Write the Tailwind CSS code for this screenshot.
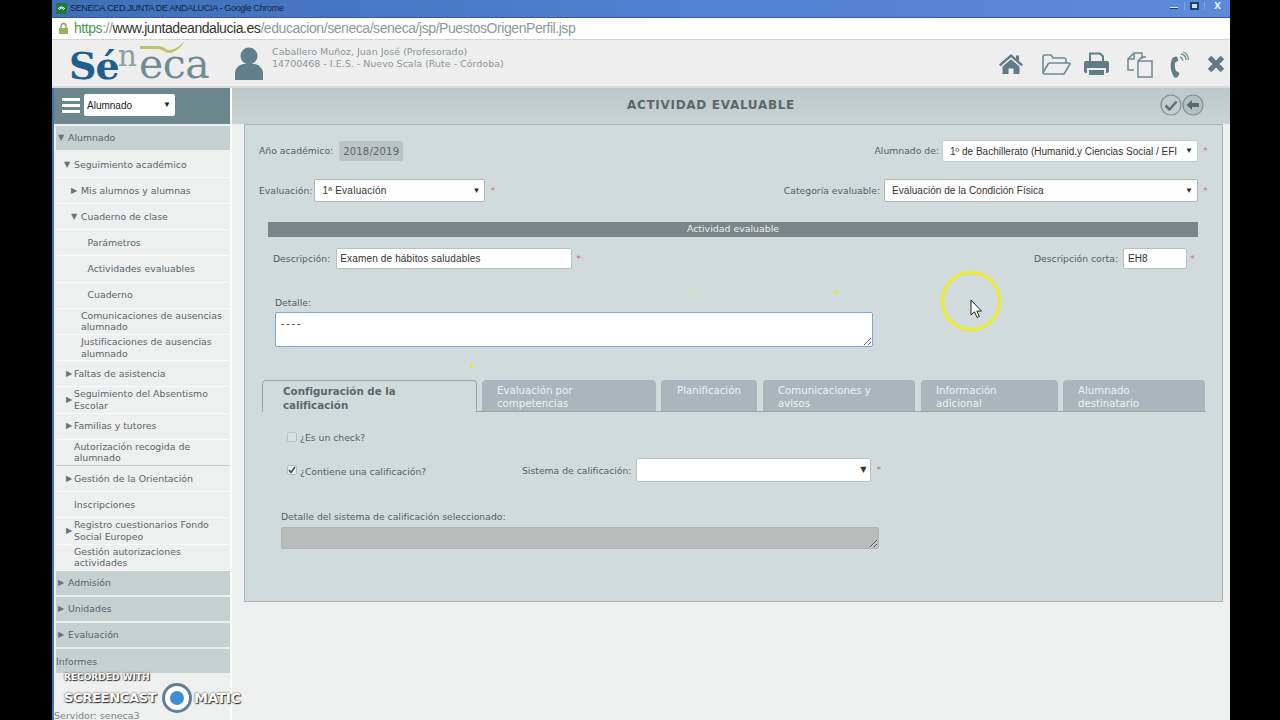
<!DOCTYPE html>
<html lang="es"><head><meta charset="utf-8"><title>SENECA</title>
<script src="https://cdn.jsdelivr.net/npm/@tailwindcss/browser@4"></script></head>
<body class="bg-black overflow-hidden">
<div class="relative w-[1280px] h-[720px] overflow-hidden bg-black font-['DejaVu_Sans',sans-serif] text-[9.250px] text-[#555f62]">
 <div class="ml-[52px] w-[1178px] h-[720px] flex flex-col bg-[#eeefef]">
  <!-- title bar -->
  <div class="h-[18px] shrink-0 flex items-center bg-gradient-to-r from-[#3f6fb5] via-[#4f80cf] to-[#5b8ad8] border-b border-[#2f5c9e]">
   <div class="ml-[4px] w-[11px] h-[11px] bg-[#1d7a3a] rounded-[1px] flex items-center justify-center"><svg width="9" height="7" viewBox="0 0 9 7"><path d="M1 4a4 4 0 0 1 7 0M2.500 5a2 2 0 0 1 4 0" stroke="#fff" fill="none"/></svg></div>
   <span class="ml-[3px] text-[#13233f] font-['Liberation_Sans',sans-serif] text-[9px] tracking-[-0.33px] whitespace-nowrap">SENECA.CED.JUNTA DE ANDALUCIA - Google Chrome</span>
   <div class="ml-auto flex items-center h-[10px] mb-[6px] bg-[#5b8ad8]">
    <div class="w-[20px] flex justify-center"><div class="w-[8px] h-[2px] mt-[4px] bg-[#e8eef8] border-b border-[#23406f]"></div></div>
    <div class="w-[21px] flex justify-center border-x border-[#7fa2dd]"><div class="w-[9px] h-[8px] border-2 border-[#23406f] bg-[#cfdcf2]"></div></div>
    <div class="w-[25px] text-center text-[#e8eef8] text-[9px] font-bold leading-[10px]">X</div>
   </div>
  </div>
  <!-- url bar -->
  <div class="h-[22px] shrink-0 flex items-center bg-white border-b border-[#d4d4d4] pl-[6px] font-['Liberation_Sans',sans-serif] text-[14px] tracking-[-0.44px] font-light">
   <svg width="11" height="13" viewBox="0 0 11 13" class="mr-[5px]"><path d="M3 6V4a2.500 2.500 0 0 1 5 0v2" fill="none" stroke="#8a9a60" stroke-width="1.300"/><rect x="1" y="6" width="9" height="6" fill="#94b455"/></svg>
   <span class="text-[#4f9a4f]">https</span><span class="text-[#8b9aa0]">://</span><span class="text-[#333]">www.juntadeandalucia.es</span><span class="text-[#8b9aa0]">/educacion/seneca/seneca/jsp/PuestosOrigenPerfil.jsp</span>
  </div>
  <!-- header -->
  <div class="h-[48px] shrink-0 flex items-center bg-[#eeeeee] border-b-2 border-[#d9dcdc]">
   <div class="ml-[17px] w-[144px] h-[44px] relative flex items-end font-['DejaVu_Serif',serif] leading-none whitespace-nowrap">
    <span class="text-[#1f5f8f] text-[38px] font-bold tracking-[-1px]">Sé</span>
    <span class="text-[#8ea0a2] text-[30px] mb-[14px] -ml-[1px] tracking-[-1px]">n</span>
    <span class="text-[#6e8c92] text-[41px] ml-[3px] tracking-[-0.500px]">eca</span>
    <svg class="absolute left-[71px] top-[0px]" width="46" height="13" viewBox="0 0 46 13"><path d="M0 5H18C24 5 27 10 30 9C36 8 40 5 44 0C42 6 37 10 30 12C25 12 22 8 18 8H0Z" fill="#bcc463"/></svg>
   </div>
   <svg class="ml-[21px] mt-[2px]" width="30" height="34" viewBox="0 0 30 34"><circle cx="15" cy="9" r="8.500" fill="#5f7f8a"/><path d="M1 33V26C1 21 6 17 10 17H20C24 17 29 21 29 26V33Z" fill="#5f7f8a"/></svg>
   <div class="ml-[8px] -mt-[11px] leading-[11.500px] text-[9.500px] text-[#8a9698] whitespace-nowrap"><p>Caballero Muñoz, Juan José (Profesorado)</p><p>14700468 - I.E.S. - Nuevo Scala (Rute - Córdoba)</p></div>
   <div class="ml-auto mt-[2px] flex items-center text-[#5f7d84]">
    <svg width="24" height="22" viewBox="0 0 24 22"><path d="M12 1 0 11.500l1.600 1.700L12 4.300l10.400 8.900 1.600-1.700-4-3.400V2.500h-3v3Z" fill="#5f7d84"/><path d="M3.500 13.500 12 6.200l8.500 7.300V21H14.500v-5.500h-5V21H3.500Z" fill="#5f7d84"/></svg>
    <svg class="ml-[19px]" width="29" height="21" viewBox="0 0 29 21"><path d="M1 19V3q0-2 2-2h6l2 3h11q2 0 2 2v3M1 19q0 1 2 1h19l6-10q.5-1-1-1H8q-1 0-2 1L1 19Z" fill="none" stroke="#6f8b91" stroke-width="1.600"/></svg>
    <svg class="ml-[13px]" width="25" height="24" viewBox="0 0 25 24"><path d="M6 9V1.500h10l3 3V9" fill="none" stroke="#5f7d84" stroke-width="2"/><path d="M2 9h21q2 0 2 2v8q0 2-2 2h-1v-5H3v5H2q-2 0-2-2v-8q0-2 2-2Z" fill="#5f7d84"/><rect x="5" y="18" width="15" height="5" fill="#5f7d84"/></svg>
    <svg class="ml-[17px]" width="27" height="27" viewBox="0 0 27 27"><path d="M8 19H2V8l6-6h8v6M8 2v6H2M12 10h14V26H12ZM12 10l4-4h4" fill="none" stroke="#6f8b91" stroke-width="1.500"/></svg>
    <svg class="ml-[16px]" width="21" height="27" viewBox="0 0 21 27"><path d="M3 8c-2 5-2 11 2 18 1 1 3 1 4-.5l1-2c.5-1 0-2-1-2.500l-2-1c-1-2-1.500-6-1-8.500l2-1c1-.5 1.500-1.500 1-2.500L8 6C7 5 4 6 3 8Z" fill="#5f7d84"/><path d="M11 6c2 .5 2.500 2 3 3.500M12 3c3 .5 5 3 5 6M14 1c3 1 5.500 4 5.500 8" fill="none" stroke="#6f8b91" stroke-width="1.300"/></svg>
    <svg class="ml-[17px] mr-[5px]" width="18" height="18" viewBox="0 0 18 18"><path d="M2.500 2.500 15.500 15.500M15.500 2.500 2.500 15.500" stroke="#5f7d84" stroke-width="5"/></svg>
   </div>
  </div>
  <div class="flex flex-1 min-h-0">
   <!-- sidebar -->
   <div class="w-[178px] shrink-0 flex flex-col bg-[#eeefef] border-l-2 border-[#4a72ad]">
    <div class="h-[36px] shrink-0 flex items-center pb-[2px] bg-[#6c878e]">
     <div class="ml-[8px] w-[18px] flex flex-col gap-[3px]"><i class="block h-[3px] bg-white"></i><i class="block h-[3px] bg-white"></i><i class="block h-[3px] bg-white"></i></div>
     <div class="ml-[4px] w-[91px] h-[22px] bg-white rounded-[2px] flex items-center justify-between pl-[3px] pr-[4px] font-['Liberation_Sans',sans-serif] text-[10px] text-[#222]"><span>Alumnado</span><span class="text-[8px]">▼</span></div>
    </div>
    <div class="ml-[2px] mt-[1.500px] w-[174px] flex flex-col leading-[11.500px] text-[9.350px] text-[#5b6568]">
     <div class="h-[26.200px] flex items-center bg-[#c5d0d1] border-b-2 border-[#eef0f0]"><span class="w-[12px] pl-[2px] text-[8px] text-[#687478]">▼</span>Alumnado</div>
     <div class="h-[26.200px] flex items-center pl-[8px] border-b border-white/70"><span class="w-[10px] text-[8px] text-[#687478]">▼</span>Seguimiento académico</div>
     <div class="h-[26.200px] flex items-center pl-[15px] border-b border-white/70"><span class="w-[10px] text-[8px] text-[#687478]">▶</span>Mis alumnos y alumnas</div>
     <div class="h-[26.200px] flex items-center pl-[15px] border-b border-white/70"><span class="w-[10px] text-[8px] text-[#687478]">▼</span>Cuaderno de clase</div>
     <div class="h-[26.200px] flex items-center pl-[31.500px] border-b border-white/70">Parámetros</div>
     <div class="h-[26.200px] flex items-center pl-[31.500px] border-b border-white/70">Actividades evaluables</div>
     <div class="h-[26.200px] flex items-center pl-[31.500px] border-b border-white/70">Cuaderno</div>
     <div class="h-[26.200px] flex items-center pl-[25px] border-b border-white/70"><span>Comunicaciones de ausencias alumnado</span></div>
     <div class="h-[26.200px] flex items-center pl-[25px] border-b border-white/70"><span>Justificaciones de ausencias alumnado</span></div>
     <div class="h-[26.200px] flex items-center pl-[10px] border-b border-white/70"><span class="w-[8px] text-[8px] text-[#687478]">▶</span>Faltas de asistencia</div>
     <div class="h-[26.200px] flex items-center pl-[10px] border-b border-white/70"><span class="w-[8px] shrink-0 text-[8px] text-[#687478]">▶</span><span>Seguimiento del Absentismo Escolar</span></div>
     <div class="h-[26.200px] flex items-center pl-[10px] border-b border-white/70"><span class="w-[8px] text-[8px] text-[#687478]">▶</span>Familias y tutores</div>
     <div class="h-[26.200px] flex items-center pl-[18px] border-b border-[#c9cfc8]"><span>Autorización recogida de alumnado</span></div>
     <div class="h-[26.200px] flex items-center pl-[10px] border-b border-white/70"><span class="w-[8px] text-[8px] text-[#687478]">▶</span>Gestión de la Orientación</div>
     <div class="h-[26.200px] flex items-center pl-[18px] border-b border-white/70">Inscripciones</div>
     <div class="h-[26.200px] flex items-center pl-[10px] border-b border-white/70"><span class="w-[8px] shrink-0 text-[8px] text-[#687478]">▶</span><span>Registro cuestionarios Fondo Social Europeo</span></div>
     <div class="h-[26.200px] flex items-center pl-[18px] border-b border-white/70"><span>Gestión autorizaciones actividades</span></div>
     <div class="h-[26.200px] flex items-center bg-[#c5d0d1] border-b-2 border-[#eef0f0]"><span class="w-[12px] pl-[2px] text-[8px] text-[#687478]">▶</span>Admisión</div>
     <div class="h-[26.200px] flex items-center bg-[#c5d0d1] border-b-2 border-[#eef0f0]"><span class="w-[12px] pl-[2px] text-[8px] text-[#687478]">▶</span>Unidades</div>
     <div class="h-[26.200px] flex items-center bg-[#c5d0d1] border-b-2 border-[#eef0f0]"><span class="w-[12px] pl-[2px] text-[8px] text-[#687478]">▶</span>Evaluación</div>
     <div class="h-[26.200px] flex items-center bg-[#c5d0d1] border-b-2 border-[#eef0f0]">Informes</div>
     <div class="mt-[35px] text-[9.500px] text-[#7b8688] whitespace-nowrap -ml-[2px]">Servidor: seneca3</div>
    </div>
   </div>
   <!-- main -->
   <div class="flex-1 min-w-0 border-l-2 border-white flex flex-col">
    <div class="h-[36px] shrink-0 relative flex items-center justify-center pr-[40px] pb-[2px] bg-gradient-to-b from-[#bcc9c9] to-[#c8d3d3]">
     <h1 class="font-bold text-[12px] text-[#5d6669] tracking-[0.7px]">ACTIVIDAD EVALUABLE</h1>
     <div class="absolute left-[928px] top-[6px] flex">
      <svg width="22" height="22" viewBox="0 0 22 22"><circle cx="11" cy="11" r="10" fill="none" stroke="#7f8f92" stroke-width="1.200"/><path d="m5.500 11.500 4 4 7-8" fill="none" stroke="#5f7074" stroke-width="2.500"/></svg>
      <svg width="22" height="22" viewBox="0 0 22 22"><circle cx="11" cy="11" r="10" fill="#b4c1c2" stroke="#7f8f92" stroke-width="1.200"/><path d="M4.500 11 10 6v3h7v4h-7v3Z" fill="#566a6f"/></svg>
     </div>
    </div>
    <div class="ml-[12px] w-[979px] h-[478px] shrink-0 border border-[#aab5b6] bg-[#d2dbdb] flex flex-col">
     <!-- row 1 -->
     <div class="mt-[15px] h-[22px] shrink-0 flex items-center pl-[14px]">
      <span>Año académico:</span>
      <span class="ml-[6px] w-[64px] h-[20px] bg-[#bcc3c3] rounded-[3px] flex items-center justify-center text-[10px] text-[#5d6669] tracking-[0.2px]">2018/2019</span>
      <span class="ml-auto mr-[3px]">Alumnado de:</span>
      <div class="w-[256px] h-[22px] bg-white rounded-[2px] border border-[#c4cccc] flex items-center justify-between pl-[7px] pr-[4px] font-['Liberation_Sans',sans-serif] text-[10px] text-[#333]"><span>1º de Bachillerato (Humanid.y Ciencias Social / EFI</span><span class="text-[8px]">▼</span></div>
      <span class="w-[24px] pl-[5px] text-[#c86b80]">*</span>
     </div>
     <!-- row 2 -->
     <div class="mt-[17px] h-[23px] shrink-0 flex items-center pl-[14px]">
      <span>Evaluación:</span>
      <div class="ml-[2px] w-[171px] h-[23px] bg-white rounded-[2px] border border-[#aeb8b8] flex items-center justify-between pl-[7px] pr-[4px] font-['Liberation_Sans',sans-serif] text-[10px] text-[#333]"><span class="tracking-[0.25px]">1ª Evaluación</span><span class="text-[8px]">▼</span></div>
      <span class="pl-[5px] text-[#c86b80]">*</span>
      <span class="ml-auto mr-[4px]">Categoría evaluable:</span>
      <div class="w-[314px] h-[23px] bg-white rounded-[2px] border border-[#aeb8b8] flex items-center justify-between pl-[7px] pr-[4px] font-['Liberation_Sans',sans-serif] text-[10px] text-[#333]"><span class="tracking-[0.05px]">Evaluación de la Condición Física</span><span class="text-[8px]">▼</span></div>
      <span class="w-[24px] pl-[5px] text-[#c86b80]">*</span>
     </div>
     <!-- band -->
     <div class="mt-[20px] ml-[23px] w-[930px] h-[15px] shrink-0 bg-[#7b8486] text-[#eef1f1] text-[9.400px] flex items-center justify-center">Actividad evaluable</div>
     <!-- row 3 -->
     <div class="mt-[11px] h-[21px] shrink-0 flex items-center pl-[28px]">
      <span>Descripción:</span>
      <div class="ml-[6px] w-[236px] h-[21px] bg-white rounded-[2px] border border-[#b8c0c0] flex items-center pl-[3px] font-['Liberation_Sans',sans-serif] text-[10px] tracking-[0.15px] text-[#333]">Examen de hábitos saludables</div>
      <span class="pl-[4px] text-[#c86b80]">*</span>
      <span class="ml-auto mr-[5px]">Descripción corta:</span>
      <div class="w-[64px] h-[21px] bg-white rounded-[2px] border border-[#b8c0c0] flex items-center pl-[4px] font-['Liberation_Sans',sans-serif] text-[10px] text-[#333]">EH8</div>
      <span class="w-[35px] pl-[3px] text-[#c86b80]">*</span>
     </div>
     <!-- detalle -->
     <div class="mt-[27px] ml-[30px] h-[14px] shrink-0 flex items-center">Detalle:</div>
     <textarea readonly class="mt-[2px] ml-[30px] w-[598px] h-[35px] shrink-0 bg-white rounded-[2px] border border-[#7ea6d8] px-[5px] py-[3px] font-['Liberation_Sans',sans-serif] text-[10px] tracking-[2px] text-[#333] outline-none">----</textarea>
     <!-- tabs -->
     <div class="mt-[33px] ml-[17px] w-[944px] h-[32px] shrink-0 flex items-end border-b border-[#9aa6a8] leading-[13px] text-[#eef2f2] text-[10.200px]">
      <div class="w-[215px] h-[32px] -mb-[1px] bg-[#d2dbdb] border border-b-0 border-[#9aa6a8] rounded-t-[4px] pl-[20px] pt-[4px] font-bold text-[10.300px] leading-[13.500px] text-[#5d6669]">Configuración de la<br>calificación</div>
      <div class="ml-[5px] w-[174px] h-[31px] bg-[#a9b7bc] rounded-t-[4px] pl-[15px] pt-[4px]">Evaluación por<br>competencias</div>
      <div class="ml-[5px] w-[96px] h-[31px] bg-[#a9b7bc] rounded-t-[4px] pl-[16px] pt-[4px]">Planificación</div>
      <div class="ml-[6px] w-[152px] h-[31px] bg-[#a9b7bc] rounded-t-[4px] pl-[15px] pt-[4px]">Comunicaciones y<br>avisos</div>
      <div class="ml-[6px] w-[137px] h-[31px] bg-[#a9b7bc] rounded-t-[4px] pl-[15px] pt-[4px]">Información<br>adicional</div>
      <div class="ml-[5px] w-[142px] h-[31px] bg-[#a9b7bc] rounded-t-[4px] pl-[15px] pt-[4px]">Alumnado<br>destinatario</div>
     </div>
     <!-- checks -->
     <div class="mt-[18px] ml-[42px] h-[16px] shrink-0 flex items-center">
      <span class="w-[10px] h-[10px] -mt-[3px] rounded-[2px] border border-[#b5bec0] bg-[#d8e0e0]"></span><span class="ml-[3px]">¿Es un check?</span>
     </div>
     <div class="mt-[12px] ml-[42px] h-[24px] shrink-0 flex items-center">
      <span class="w-[10px] h-[10px] -mt-[1px] rounded-[2px] border border-[#b5bec0] bg-[#e8eeee] flex items-center justify-center"><svg width="8" height="8" viewBox="0 0 8 8"><path d="m1 4 2 2.500L7 1" fill="none" stroke="#444" stroke-width="1.500"/></svg></span><span class="ml-[3px] w-[222px] pt-[3px]">¿Contiene una calificación?</span>
      <span class="mr-[5px] pt-[1px]">Sistema de calificación:</span>
      <div class="w-[235px] h-[24px] bg-white rounded-[2px] border border-[#b8c0c0] flex items-center justify-end pr-[4px] text-[#333]"><span class="text-[8px]">▼</span></div>
      <span class="pl-[5px] text-[#c86b80]">*</span>
     </div>
     <div class="mt-[28px] ml-[36px] h-[14px] shrink-0 flex items-center">Detalle del sistema de calificación seleccionado:</div>
     <textarea readonly class="mt-[3px] ml-[36px] w-[598px] h-[22px] shrink-0 bg-[#b9bcba] rounded-[2px] border border-[#b0b4b2] outline-none"></textarea>
    </div>
   </div>
  </div>
 </div>
 <!-- screencast watermark -->
 <div class="absolute left-[64px] top-[671px] w-[180px] h-[44px] text-white font-['DejaVu_Sans',sans-serif] font-bold [text-shadow:0_0_2px_#333,1px_1px_1px_#333] whitespace-nowrap">
  <div class="text-[9px] leading-[13px]">RECORDED WITH</div>
  <div class="flex items-center -mt-[1px]">
   <span class="w-[98px] text-[13px] tracking-[-0.3px]">SCREENCAST</span>
   <span class="w-[30px] h-[30px] rounded-full border-[3px] border-[#5f7f98] bg-white flex items-center justify-center"><i class="block w-[14px] h-[14px] rounded-full bg-[#3f8fd0]"></i></span>
   <span class="ml-[2px] text-[14px] tracking-[-0.5px]">MATIC</span>
  </div>
 </div>
 <!-- highlight + cursor -->
 <div class="absolute left-[941px] top-[271px] w-[60px] h-[60px] rounded-full border-[3px] border-[#ecec2c]"></div>
 <svg class="absolute left-[970px] top-[299px]" width="13" height="20" viewBox="0 0 13 20"><path d="M1 1v15l3.500-3.200 2.600 5.700 2.300-1-2.600-5.400H11.500Z" fill="#fff" stroke="#222" stroke-width="1"/></svg>
 <i class="absolute left-[690px] top-[290px] w-[3px] h-[2px] bg-[#e6e67a]"></i>
 <i class="absolute left-[834px] top-[290px] w-[3px] h-[4px] bg-[#e6e64a]"></i>
 <i class="absolute left-[470px] top-[364px] w-[3px] h-[4px] bg-[#e6e64a]"></i>
</div>
</body></html>
